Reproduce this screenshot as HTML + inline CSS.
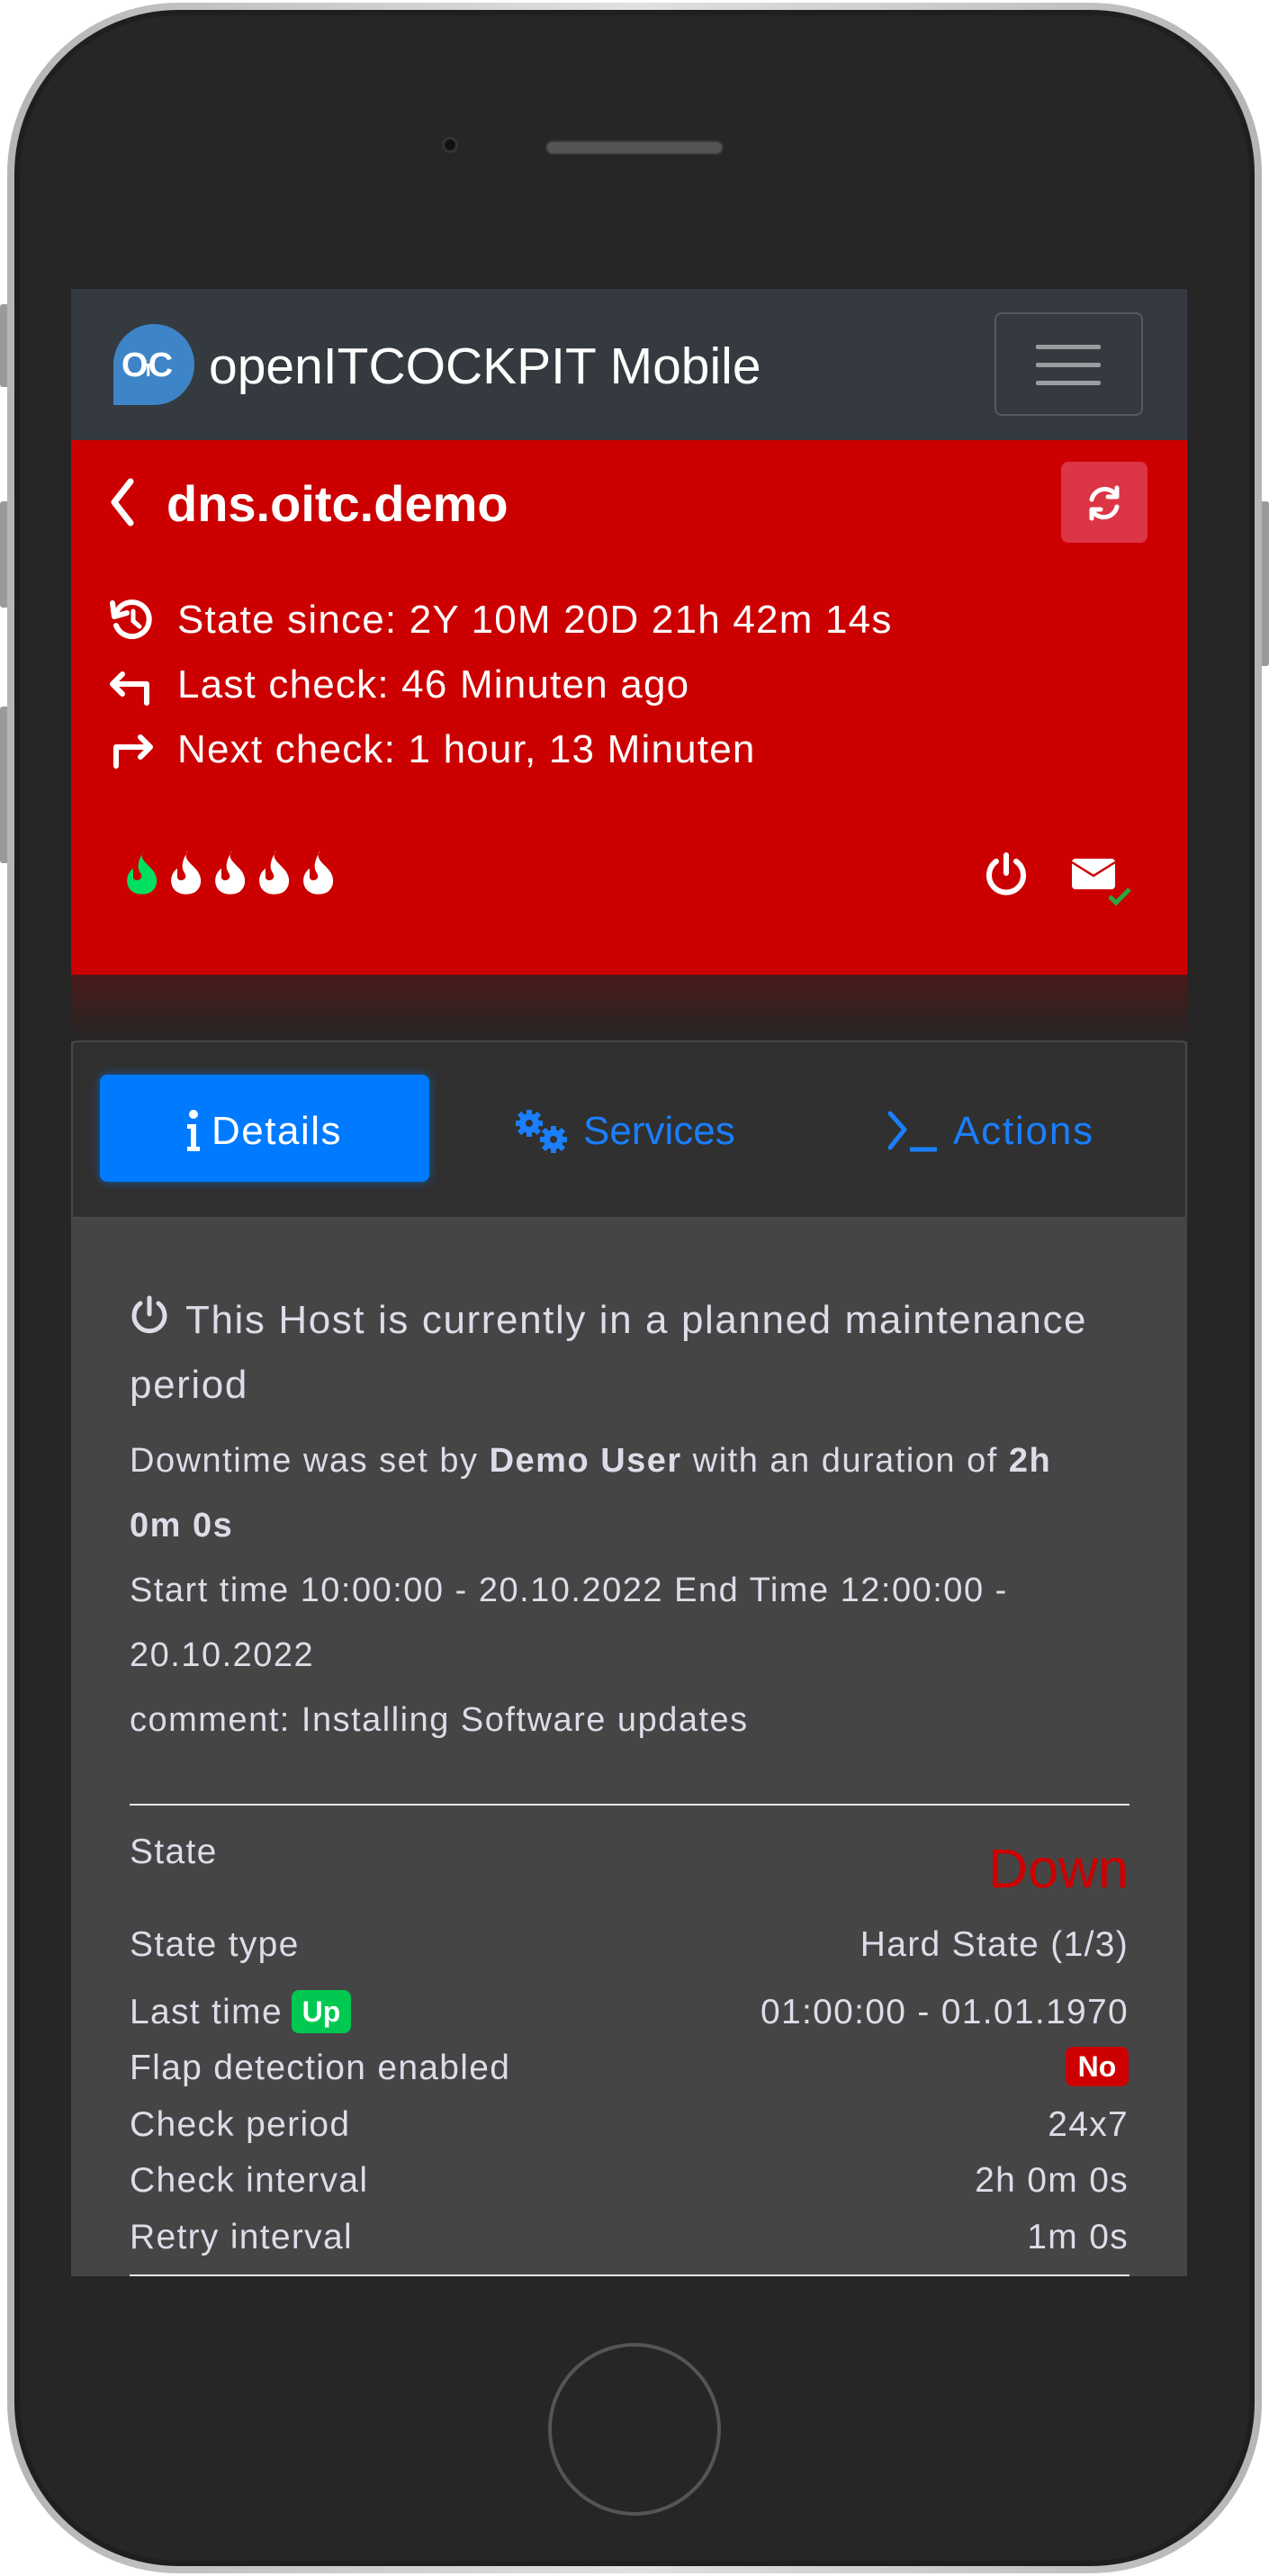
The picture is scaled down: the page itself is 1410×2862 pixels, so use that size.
<!DOCTYPE html>
<html><head><meta charset="utf-8">
<style>
*{margin:0;padding:0;box-sizing:border-box}
html,body{width:1410px;height:2862px;background:#fff;overflow:hidden;font-family:"Liberation Sans",sans-serif}
.abs{position:absolute}
.t{position:absolute;white-space:nowrap;line-height:1}
.r{letter-spacing:1.3px}
</style></head><body>
<div class="abs" style="left:0;top:338px;width:12px;height:92px;background:#9a9a9a;border-radius:3px"></div>
<div class="abs" style="left:0;top:557px;width:12px;height:118px;background:#9a9a9a;border-radius:3px"></div>
<div class="abs" style="left:0;top:785px;width:12px;height:174px;background:#9a9a9a;border-radius:3px"></div>
<div class="abs" style="right:0;top:557px;width:12px;height:183px;background:#9a9a9a;border-radius:3px"></div>
<div class="abs" style="left:8px;top:3px;width:1394px;height:2856px;border-radius:190px;background:linear-gradient(90deg,#b5b5b5,#e0e0e0 50%,#b5b5b5)"></div>
<div class="abs" style="left:16px;top:11px;width:1378px;height:2840px;border-radius:182px;background:#1f1f1f"></div>
<div class="abs" style="left:22px;top:17px;width:1366px;height:2828px;border-radius:176px;background:#262626"></div>
<div class="abs" style="left:491px;top:152px;width:18px;height:18px;border-radius:50%;background:#111;border:3px solid #333"></div>
<div class="abs" style="left:606px;top:156px;width:198px;height:16px;border-radius:8px;background:#555;border:2px solid #3a3a3a"></div>
<div class="abs" style="left:609px;top:2603px;width:192px;height:192px;border-radius:50%;border:4px solid #555;background:#262626"></div>

<div class="abs" style="left:79px;top:321px;width:1240px;height:2208px;background:#454545;overflow:hidden">
  <div class="abs" style="left:0;top:0;width:1240px;height:168px;background:#343a40"></div>
  <div class="abs" style="left:47px;top:39px;width:90px;height:90px;background:#3d85c6;border-radius:45px 45px 45px 0"></div>
  <div class="t" style="left:56px;top:66px;font-size:38px;font-weight:bold;color:#fff;letter-spacing:-6px">O<span style="font-size:20px">T</span>C</div>
  <div class="t" style="left:153px;top:58px;font-size:57px;color:#fff">openITCOCKPIT Mobile</div>
  <div class="abs" style="left:1026px;top:26px;width:165px;height:115px;border:2px solid #555a60;border-radius:8px"></div>
  <div class="abs" style="left:1072px;top:62px;width:72px;height:5px;background:#9a9da0;border-radius:2px"></div>
  <div class="abs" style="left:1072px;top:82px;width:72px;height:5px;background:#9a9da0;border-radius:2px"></div>
  <div class="abs" style="left:1072px;top:102px;width:72px;height:5px;background:#9a9da0;border-radius:2px"></div>

  <div class="abs" style="left:0;top:168px;width:1240px;height:594px;background:#cc0000"></div>
  <div class="abs" style="left:0;top:762px;width:1240px;height:74px;background:linear-gradient(#4a1a1a,#262626)"></div>
  <svg class="abs" style="left:42px;top:210px" width="30" height="54"><path d="M24 4 L6 27 L24 50" stroke="#fff" stroke-width="7" fill="none" stroke-linecap="round" stroke-linejoin="round"/></svg>
  <div class="t" style="left:106px;top:211px;font-size:56px;font-weight:bold;color:#fff">dns.oitc.demo</div>
  <div class="abs" style="left:1100px;top:192px;width:96px;height:90px;background:#dc3545;border-radius:8px"></div>
  <svg class="abs" style="left:1126px;top:216px" width="44" height="44" viewBox="0 0 44 44"><path d="M8 18 A15 15 0 0 1 35 13 M36 5 L36 15 L26 15 M36 26 A15 15 0 0 1 9 31 M8 39 L8 29 L18 29" stroke="#fff" stroke-width="5" fill="none" stroke-linecap="round" stroke-linejoin="round"/></svg>

  <svg class="abs" style="left:42px;top:344px" width="50" height="48" viewBox="0 0 50 48"><path d="M9 14 A19 19 0 1 1 8 30" stroke="#fff" stroke-width="6" fill="none" stroke-linecap="round"/><path d="M4 5 L6 20 L20 16" stroke="#fff" stroke-width="6" fill="none" stroke-linejoin="round" stroke-linecap="round"/><path d="M27 14 L27 25 L34 31" stroke="#fff" stroke-width="5" fill="none" stroke-linecap="round"/></svg>
  <div class="t" style="left:118px;top:346px;font-size:44px;color:#fff;letter-spacing:1.2px">State since: 2Y 10M 20D 21h 42m 14s</div>
  <svg class="abs" style="left:42px;top:420px" width="50" height="44" viewBox="0 0 50 44"><path d="M15 8 L4 19 L15 30 M4 19 L42 19 L42 40" stroke="#fff" stroke-width="6" fill="none" stroke-linecap="round" stroke-linejoin="round"/></svg>
  <div class="t" style="left:118px;top:418px;font-size:44px;color:#fff;letter-spacing:1.2px">Last check: 46 Minuten ago</div>
  <svg class="abs" style="left:42px;top:490px" width="50" height="44" viewBox="0 0 50 44"><path d="M35 8 L46 19 L35 30 M46 19 L8 19 L8 40" stroke="#fff" stroke-width="6" fill="none" stroke-linecap="round" stroke-linejoin="round"/></svg>
  <div class="t" style="left:118px;top:490px;font-size:44px;color:#fff;letter-spacing:1.2px">Next check: 1 hour, 13 Minuten</div>

  <svg class="abs" style="left:60px;top:623px" width="260" height="52" viewBox="0 0 260 52">
    <defs><path id="f" d="M20 1 C13 9 23 15 29 22 C36 30 36 41 28 47 C21 51 8 51 3 42 C-1 34 2 25 8 21 L8 31 C9 35 15 35 17 31 C19 27 12 24 14 15 C15 9 18 5 20 1 Z"/></defs>
    <use href="#f" x="1" fill="#00e060"/>
    <use href="#f" x="50" fill="#fff"/>
    <use href="#f" x="99" fill="#fff"/>
    <use href="#f" x="148" fill="#fff"/>
    <use href="#f" x="197" fill="#fff"/>
  </svg>
  <svg class="abs" style="left:1014px;top:625px" width="50" height="50" viewBox="0 0 50 50"><path d="M14 11 A19 19 0 1 0 36 11" stroke="#fff" stroke-width="6" fill="none" stroke-linecap="round"/><path d="M25 4 L25 24" stroke="#fff" stroke-width="6" stroke-linecap="round"/></svg>
  <svg class="abs" style="left:1110px;top:631px" width="72" height="56" viewBox="0 0 72 56"><rect x="2" y="2" width="48" height="34" rx="4" fill="#fff"/><path d="M2 6 L26 21 L50 6" stroke="#cc0000" stroke-width="2.5" fill="none"/><path d="M44 44 L51 51 L66 36" stroke="#28a745" stroke-width="5" fill="none"/></svg>

  <div class="abs" style="left:0;top:835px;width:1240px;height:198px;background:#303030;border:2px solid #484848;border-radius:6px 6px 0 0"></div>
  <div class="abs" style="left:32px;top:873px;width:366px;height:119px;background:#007bff;border-radius:8px;box-shadow:0 0 10px rgba(0,123,255,.6)"></div>
  <svg class="abs" style="left:126px;top:911px" width="20" height="48" viewBox="0 0 20 48"><circle cx="10" cy="6" r="5" fill="#fff"/><path d="M3 17 L13 17 L13 42 L17 42 L17 47 L3 47 L3 42 L7 42 L7 22 L3 22 Z" fill="#fff"/></svg>
  <div class="t" style="left:156px;top:914px;font-size:44px;color:#fff;letter-spacing:1.5px">Details</div>
  <svg class="abs" style="left:493px;top:910px" width="64" height="52" viewBox="0 0 64 52"><g fill="#1a7fff"><circle cx="16" cy="17" r="11"/><circle cx="43" cy="35" r="11"/></g><g stroke="#1a7fff" stroke-width="6"><path d="M16 2 V32 M1 17 H31 M5 6 L27 28 M27 6 L5 28"/><path d="M43 20 V50 M28 35 H58 M32 24 L54 46 M54 24 L32 46"/></g><circle cx="16" cy="17" r="4" fill="#303030"/><circle cx="43" cy="35" r="4" fill="#303030"/></svg>
  <div class="t" style="left:569px;top:914px;font-size:44px;color:#1a7fff">Services</div>
  <svg class="abs" style="left:906px;top:912px" width="60" height="48" viewBox="0 0 60 48"><path d="M4 4 L20 22 L4 42" stroke="#1a7fff" stroke-width="5" fill="none" stroke-linecap="round" stroke-linejoin="round"/><path d="M26 44 L56 44" stroke="#1a7fff" stroke-width="5"/></svg>
  <div class="t" style="left:980px;top:914px;font-size:44px;color:#1a7fff;letter-spacing:1.8px">Actions</div>

  <div style="position:absolute;left:65px;top:1110px;width:1140px;color:#dcdde8">
    <svg style="position:absolute;left:0;top:8px" width="44" height="44" viewBox="0 0 44 44"><path d="M12 9 A17 17 0 1 0 32 9" stroke="#dcdde8" stroke-width="5" fill="none" stroke-linecap="round"/><path d="M22 3 L22 21" stroke="#dcdde8" stroke-width="5" stroke-linecap="round"/></svg>
    <div style="font-size:44px;line-height:72px;text-indent:62px;letter-spacing:1.6px">This Host is currently in a planned maintenance period</div>
    <div style="font-size:38px;line-height:72px;margin-top:12px;letter-spacing:1.5px">Downtime was set by <b>Demo User</b> with an duration of <b>2h</b><br><b>0m 0s</b></div>
    <div style="font-size:38px;line-height:72px;letter-spacing:1.5px">Start time 10:00:00 - 20.10.2022 End Time 12:00:00 -<br>20.10.2022</div>
    <div style="font-size:38px;line-height:72px;letter-spacing:1.5px">comment: Installing Software updates</div>
  </div>
  <div class="abs" style="left:65px;top:1683px;width:1111px;height:2px;background:#e8e8e8"></div>
  <div class="t r" style="left:65px;top:1717px;font-size:39px;color:#dcdde8">State</div>
  <div class="t" style="right:65px;top:1725px;font-size:61px;color:#cc0000">Down</div>
  <div class="t r" style="left:65px;top:1820px;font-size:39px;color:#dcdde8">State type</div>
  <div class="t r" style="right:65px;top:1820px;font-size:39px;color:#dcdde8">Hard State (1/3)</div>
  <div class="t r" style="left:65px;top:1895px;font-size:39px;color:#dcdde8">Last time</div>
  <div class="abs" style="left:245px;top:1890px;width:66px;height:48px;background:#00c851;border-radius:8px;color:#fff;font-weight:bold;font-size:32px;text-align:center;line-height:48px">Up</div>
  <div class="t r" style="right:65px;top:1895px;font-size:39px;color:#dcdde8">01:00:00 - 01.01.1970</div>
  <div class="t r" style="left:65px;top:1957px;font-size:39px;color:#dcdde8">Flap detection enabled</div>
  <div class="abs" style="right:65px;top:1953px;width:70px;height:44px;background:#cc0000;border-radius:8px;color:#fff;font-weight:bold;font-size:32px;text-align:center;line-height:44px">No</div>
  <div class="t r" style="left:65px;top:2020px;font-size:39px;color:#dcdde8">Check period</div>
  <div class="t r" style="right:65px;top:2020px;font-size:39px;color:#dcdde8">24x7</div>
  <div class="t r" style="left:65px;top:2082px;font-size:39px;color:#dcdde8">Check interval</div>
  <div class="t r" style="right:65px;top:2082px;font-size:39px;color:#dcdde8">2h 0m 0s</div>
  <div class="t r" style="left:65px;top:2145px;font-size:39px;color:#dcdde8">Retry interval</div>
  <div class="t r" style="right:65px;top:2145px;font-size:39px;color:#dcdde8">1m 0s</div>
  <div class="abs" style="left:65px;top:2206px;width:1111px;height:2px;background:#e8e8e8"></div>
</div>
</body></html>
